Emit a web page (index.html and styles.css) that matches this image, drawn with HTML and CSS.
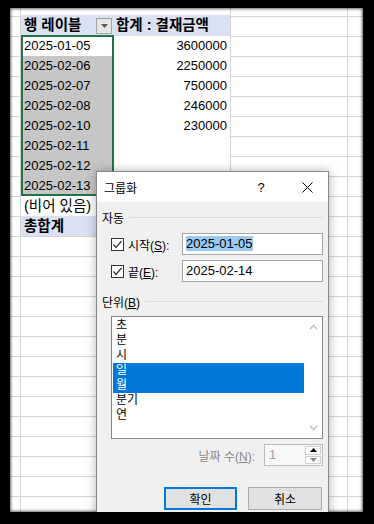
FILE: index.html
```html
<!DOCTYPE html>
<html lang="ko">
<head>
    <meta charset="UTF-8">
    <title>그룹화</title>
    <link rel="stylesheet" href="styles.css">
</head>
<body>

<div class="sheet">
    <div class="pivot">
        <div class="cell head head-a">행 레이블
            <span class="filter-btn">
                <svg width="7" height="4" viewBox="0 0 7 4"><polygon points="0,0 7,0 3.5,4" fill="#595959"/></svg>
            </span>
        </div>
        <div class="cell head">합계 : 결재금액</div>

        <div class="cell">2025-01-05</div><div class="cell num">3600000</div>
        <div class="cell sel">2025-02-06</div><div class="cell num">2250000</div>
        <div class="cell sel">2025-02-07</div><div class="cell num">750000</div>
        <div class="cell sel">2025-02-08</div><div class="cell num">246000</div>
        <div class="cell sel">2025-02-10</div><div class="cell num">230000</div>
        <div class="cell sel">2025-02-11</div><div class="cell num"></div>
        <div class="cell sel">2025-02-12</div><div class="cell num"></div>
        <div class="cell sel">2025-02-13</div><div class="cell num"></div>
        <div class="cell label">(비어 있음)</div><div class="cell num"></div>
        <div class="cell total">총합계</div><div class="cell total"></div>

        <!-- active range outline -->
        <div class="selection"></div>
    </div>

    <div class="dialog">
        <div class="titlebar">
            <span class="title">그룹화</span>
            <span class="help">?</span>
            <span class="close">
                <svg width="11" height="11" viewBox="0 0 11 11"><path d="M0.5 0.5 L10.5 10.5 M10.5 0.5 L0.5 10.5" stroke="#000" stroke-width="1"/></svg>
            </span>
        </div>

        <div class="group"><span>자동</span></div>

        <div class="field">
            <svg class="check" width="13" height="13" viewBox="0 0 13 13"><rect x="0.5" y="0.5" width="12" height="12" fill="#fff" stroke="#333"/><polyline points="2.5,6.5 5,9.5 10.5,3" fill="none" stroke="#333" stroke-width="1.2"/></svg>
            <label>시작(<u>S</u>):</label>
            <div class="text-box"><span class="picked">2025-01-05</span></div>
        </div>

        <div class="field field-end">
            <svg class="check" width="13" height="13" viewBox="0 0 13 13"><rect x="0.5" y="0.5" width="12" height="12" fill="#fff" stroke="#333"/><polyline points="2.5,6.5 5,9.5 10.5,3" fill="none" stroke="#333" stroke-width="1.2"/></svg>
            <label>끝(<u>E</u>):</label>
            <div class="text-box">2025-02-14</div>
        </div>

        <div class="group group-unit"><span>단위(<u>B</u>)</span></div>

        <div class="listbox">
            <div class="list-items">
                <div>초</div>
                <div>분</div>
                <div>시</div>
                <div class="on">일</div>
                <div class="on">월</div>
                <div>분기</div>
                <div>연</div>
            </div>
            <div class="scroll">
                <svg width="9" height="6" viewBox="0 0 9 6"><polyline points="0.8,5.2 4.5,1.5 8.2,5.2" fill="none" stroke="#c4c4c4" stroke-width="1.6"/></svg>
                <svg width="9" height="6" viewBox="0 0 9 6"><polyline points="0.8,0.8 4.5,4.5 8.2,0.8" fill="none" stroke="#c4c4c4" stroke-width="1.6"/></svg>
            </div>
        </div>

        <div class="spin-row">
            <span>날짜 수(<u>N</u>):</span>
            <div class="spin">
                <span class="spin-value">1</span>
                <div class="spin-btns">
                    <span class="spin-up"><svg width="7" height="4" viewBox="0 0 7 4"><polygon points="0,4 7,4 3.5,0" fill="#000"/></svg></span>
                    <span class="spin-down"><svg width="7" height="4" viewBox="0 0 7 4"><polygon points="0,0 7,0 3.5,4" fill="#8a8a8a"/></svg></span>
                </div>
            </div>
        </div>

        <div class="buttons">
            <div class="btn btn-default">확인</div>
            <div class="btn">취소</div>
        </div>
    </div>
</div>

</body>
</html>
```

FILE: styles.css
```css
* {
    box-sizing: border-box;
}

body {
    margin: 0;
    width: 374px;
    height: 524px;
    padding: 8px 11px 12px 10px;
    background-color: #000;
    font-family: "Liberation Sans", "Noto Sans CJK KR", sans-serif;
    color: #000;
    overflow: hidden;
}

/* worksheet with gridlines */
.sheet {
    position: relative;
    height: 100%;
    padding: 7px 0 0 11px;
    overflow: hidden;
    background-color: #fff;
    background-image:
        linear-gradient(#d4d4d4, #d4d4d4),
        linear-gradient(#d4d4d4, #d4d4d4),
        linear-gradient(#d4d4d4, #d4d4d4),
        linear-gradient(to bottom, #d4d4d4 1px, transparent 1px);
    background-size: 1px 100%, 1px 100%, 1px 100%, 100% 20px;
    background-position: 10px 0, 220px 0, 337px 0, 0 8px;
    background-repeat: no-repeat, no-repeat, no-repeat, repeat;
    box-shadow: inset 0 0 3px 1px rgba(0, 0, 0, 0.6);
}

.pivot {
    position: relative;
    width: 209px;
    display: grid;
    grid-template-columns: 92px 117px;
    grid-template-rows: 21px repeat(9, 20px);
}

.cell {
    padding: 0 3px;
    font-size: 13px;
    line-height: 20px;
    white-space: nowrap;
    background-color: #fff;
}

.head {
    background-color: #d9e1f2;
    font-size: 14.5px;
    font-weight: bold;
    line-height: 21px;
}

.head-a {
    display: flex;
    align-items: center;
    justify-content: space-between;
    padding-right: 1px;
}

.filter-btn {
    width: 16px;
    height: 16px;
    border: 1px solid #a6a6a6;
    background-color: #e6e6e6;
    display: flex;
    align-items: center;
    justify-content: center;
}

.sel {
    background-color: #c6c6c6;
}

.num {
    text-align: right;
}

.label {
    font-size: 14.5px;
}

.total {
    background-color: #d9e1f2;
    font-size: 14.5px;
    font-weight: bold;
}

.selection {
    position: absolute;
    left: 0;
    top: 20px;
    width: 93px;
    height: 161px;
    border: 2px solid #217346;
}

/* group dialog */
.dialog {
    position: absolute;
    left: 86px;
    top: 163px;
    width: 233px;
    height: 360px;
    border: 1px solid #888;
    background-color: #f0f0f0;
    box-shadow: 0 0 10px rgba(0, 0, 0, 0.3);
    font-size: 12px;
}

.titlebar {
    display: flex;
    align-items: center;
    height: 30px;
    background-color: #fff;
}

.title {
    flex: 1;
    padding-left: 7px;
    font-size: 12px;
}

.help {
    width: 50px;
    text-align: center;
    font-size: 13px;
}

.close {
    width: 42px;
    display: flex;
    justify-content: center;
}

.group {
    display: flex;
    align-items: center;
    gap: 5px;
    height: 18px;
    margin: 6px 5px 0 5px;
}

.group::after {
    content: '';
    flex: 1;
    height: 1px;
    background-color: #dcdcdc;
}

.group-unit {
    margin-top: 10px;
}

.field {
    display: flex;
    align-items: center;
    height: 22px;
    margin: 7px 5px 0 14px;
}

.field-end {
    margin-top: 5px;
}

.check {
    flex: none;
    margin-right: 4px;
}

.field label {
    width: 54px;
}

.text-box {
    width: 141px;
    height: 22px;
    border: 1px solid #a5a5a5;
    background-color: #fff;
    padding-left: 3px;
    font-size: 13px;
    line-height: 20px;
}

.picked {
    background-color: #99c9ef;
}

.listbox {
    display: flex;
    width: 212px;
    height: 123px;
    margin: 6px 0 0 14px;
    border: 1px solid #828790;
    background-color: #fff;
}

.list-items {
    flex: 1;
    padding: 1px 0 0 1px;
}

.list-items div {
    height: 15px;
    line-height: 15px;
    padding-left: 3px;
}

.list-items .on {
    background-color: #0078d7;
    color: #fff;
}

.scroll {
    width: 18px;
    display: flex;
    flex-direction: column;
    align-items: center;
    justify-content: space-between;
    padding: 7px 0 7px;
}

.spin-row {
    display: flex;
    align-items: center;
    justify-content: flex-end;
    gap: 9px;
    height: 22px;
    margin: 5px 5px 0 0;
    color: #8a8a8a;
}

.spin {
    display: flex;
    width: 59px;
    height: 22px;
    border: 1px solid #bcbcbc;
    background-color: #f7f7f7;
}

.spin-value {
    flex: 1;
    padding-left: 4px;
    font-size: 13px;
    line-height: 20px;
    color: #a0a0a0;
}

.spin-btns {
    width: 17px;
    display: flex;
    flex-direction: column;
    padding: 1px 1px 1px 0;
    gap: 1px;
}

.spin-btns span {
    flex: 1;
    display: flex;
    align-items: center;
    justify-content: center;
    border: 1px solid #d0d0d0;
    background-color: #fcfcfc;
}

.buttons {
    display: flex;
    justify-content: flex-end;
    gap: 11px;
    margin: 21px 6px 0 0;
}

.btn {
    width: 74px;
    height: 23px;
    border: 1px solid #adadad;
    background-color: #e1e1e1;
    display: flex;
    align-items: center;
    justify-content: center;
}

.btn-default {
    width: 73px;
    border: 2px solid #0078d7;
}
```
